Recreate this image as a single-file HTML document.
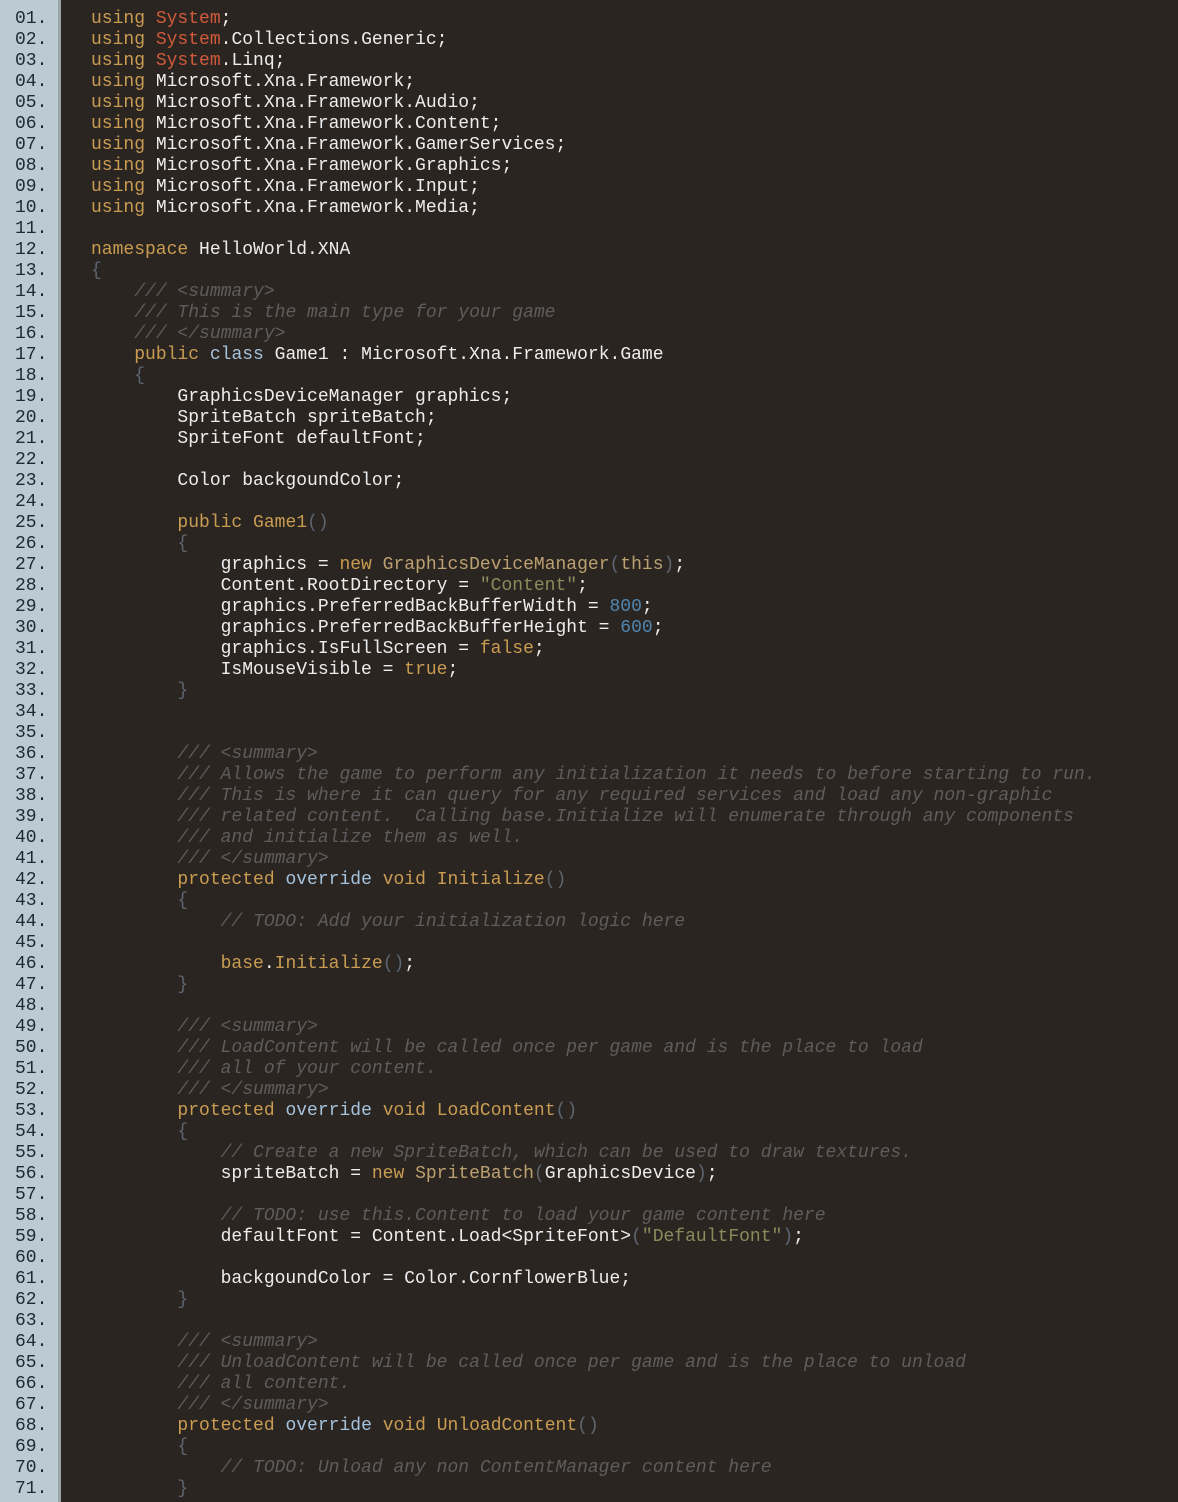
<!DOCTYPE html>
<html><head><meta charset="utf-8"><style>
html,body{margin:0;padding:0;width:1178px;height:1502px;overflow:hidden;background:#2b2522;}
.g{position:absolute;left:0;top:0;width:58px;height:1502px;background:#bccbd3;border-right:3px solid #9aa3a8;}
pre{margin:0;position:absolute;top:9px;font-family:"Liberation Mono","Courier New",monospace;font-size:18px;line-height:21px;}
#n{left:15px;color:#1e2a33;}
#c{left:91px;color:#ededed;}
.k{color:#c99c52}.s{color:#d05a3a}.t{color:#bba070}.o{color:#a5c3dc}
.c{color:#5e5c5c;font-style:italic}.n{color:#4f86b0}.q{color:#8c8a5c}.p{color:#5c6670}
</style></head><body>
<div class="g"></div>
<pre id="n">01.
02.
03.
04.
05.
06.
07.
08.
09.
10.
11.
12.
13.
14.
15.
16.
17.
18.
19.
20.
21.
22.
23.
24.
25.
26.
27.
28.
29.
30.
31.
32.
33.
34.
35.
36.
37.
38.
39.
40.
41.
42.
43.
44.
45.
46.
47.
48.
49.
50.
51.
52.
53.
54.
55.
56.
57.
58.
59.
60.
61.
62.
63.
64.
65.
66.
67.
68.
69.
70.
71.</pre>
<pre id="c"><span class="k">using</span> <span class="s">System</span>;
<span class="k">using</span> <span class="s">System</span>.Collections.Generic;
<span class="k">using</span> <span class="s">System</span>.Linq;
<span class="k">using</span> Microsoft.Xna.Framework;
<span class="k">using</span> Microsoft.Xna.Framework.Audio;
<span class="k">using</span> Microsoft.Xna.Framework.Content;
<span class="k">using</span> Microsoft.Xna.Framework.GamerServices;
<span class="k">using</span> Microsoft.Xna.Framework.Graphics;
<span class="k">using</span> Microsoft.Xna.Framework.Input;
<span class="k">using</span> Microsoft.Xna.Framework.Media;

<span class="k">namespace</span> HelloWorld.XNA
<span class="p">{</span>
    <span class="c">/// &lt;summary&gt;</span>
    <span class="c">/// This is the main type for your game</span>
    <span class="c">/// &lt;/summary&gt;</span>
    <span class="k">public</span> <span class="o">class</span> Game1 : Microsoft.Xna.Framework.Game
    <span class="p">{</span>
        GraphicsDeviceManager graphics;
        SpriteBatch spriteBatch;
        SpriteFont defaultFont;

        Color backgoundColor;

        <span class="k">public</span> <span class="k">Game1</span><span class="p">()</span>
        <span class="p">{</span>
            graphics = <span class="k">new</span> <span class="t">GraphicsDeviceManager</span><span class="p">(</span><span class="t">this</span><span class="p">)</span>;
            Content.RootDirectory = <span class="q">"Content"</span>;
            graphics.PreferredBackBufferWidth = <span class="n">800</span>;
            graphics.PreferredBackBufferHeight = <span class="n">600</span>;
            graphics.IsFullScreen = <span class="k">false</span>;
            IsMouseVisible = <span class="k">true</span>;
        <span class="p">}</span>


        <span class="c">/// &lt;summary&gt;</span>
        <span class="c">/// Allows the game to perform any initialization it needs to before starting to run.</span>
        <span class="c">/// This is where it can query for any required services and load any non-graphic</span>
        <span class="c">/// related content.  Calling base.Initialize will enumerate through any components</span>
        <span class="c">/// and initialize them as well.</span>
        <span class="c">/// &lt;/summary&gt;</span>
        <span class="k">protected</span> <span class="o">override</span> <span class="k">void</span> <span class="k">Initialize</span><span class="p">()</span>
        <span class="p">{</span>
            <span class="c">// TODO: Add your initialization logic here</span>

            <span class="k">base</span>.<span class="k">Initialize</span><span class="p">()</span>;
        <span class="p">}</span>

        <span class="c">/// &lt;summary&gt;</span>
        <span class="c">/// LoadContent will be called once per game and is the place to load</span>
        <span class="c">/// all of your content.</span>
        <span class="c">/// &lt;/summary&gt;</span>
        <span class="k">protected</span> <span class="o">override</span> <span class="k">void</span> <span class="k">LoadContent</span><span class="p">()</span>
        <span class="p">{</span>
            <span class="c">// Create a new SpriteBatch, which can be used to draw textures.</span>
            spriteBatch = <span class="k">new</span> <span class="t">SpriteBatch</span><span class="p">(</span>GraphicsDevice<span class="p">)</span>;

            <span class="c">// TODO: use this.Content to load your game content here</span>
            defaultFont = Content.Load&lt;SpriteFont&gt;<span class="p">(</span><span class="q">"DefaultFont"</span><span class="p">)</span>;

            backgoundColor = Color.CornflowerBlue;
        <span class="p">}</span>

        <span class="c">/// &lt;summary&gt;</span>
        <span class="c">/// UnloadContent will be called once per game and is the place to unload</span>
        <span class="c">/// all content.</span>
        <span class="c">/// &lt;/summary&gt;</span>
        <span class="k">protected</span> <span class="o">override</span> <span class="k">void</span> <span class="k">UnloadContent</span><span class="p">()</span>
        <span class="p">{</span>
            <span class="c">// TODO: Unload any non ContentManager content here</span>
        <span class="p">}</span></pre>
</body></html>
